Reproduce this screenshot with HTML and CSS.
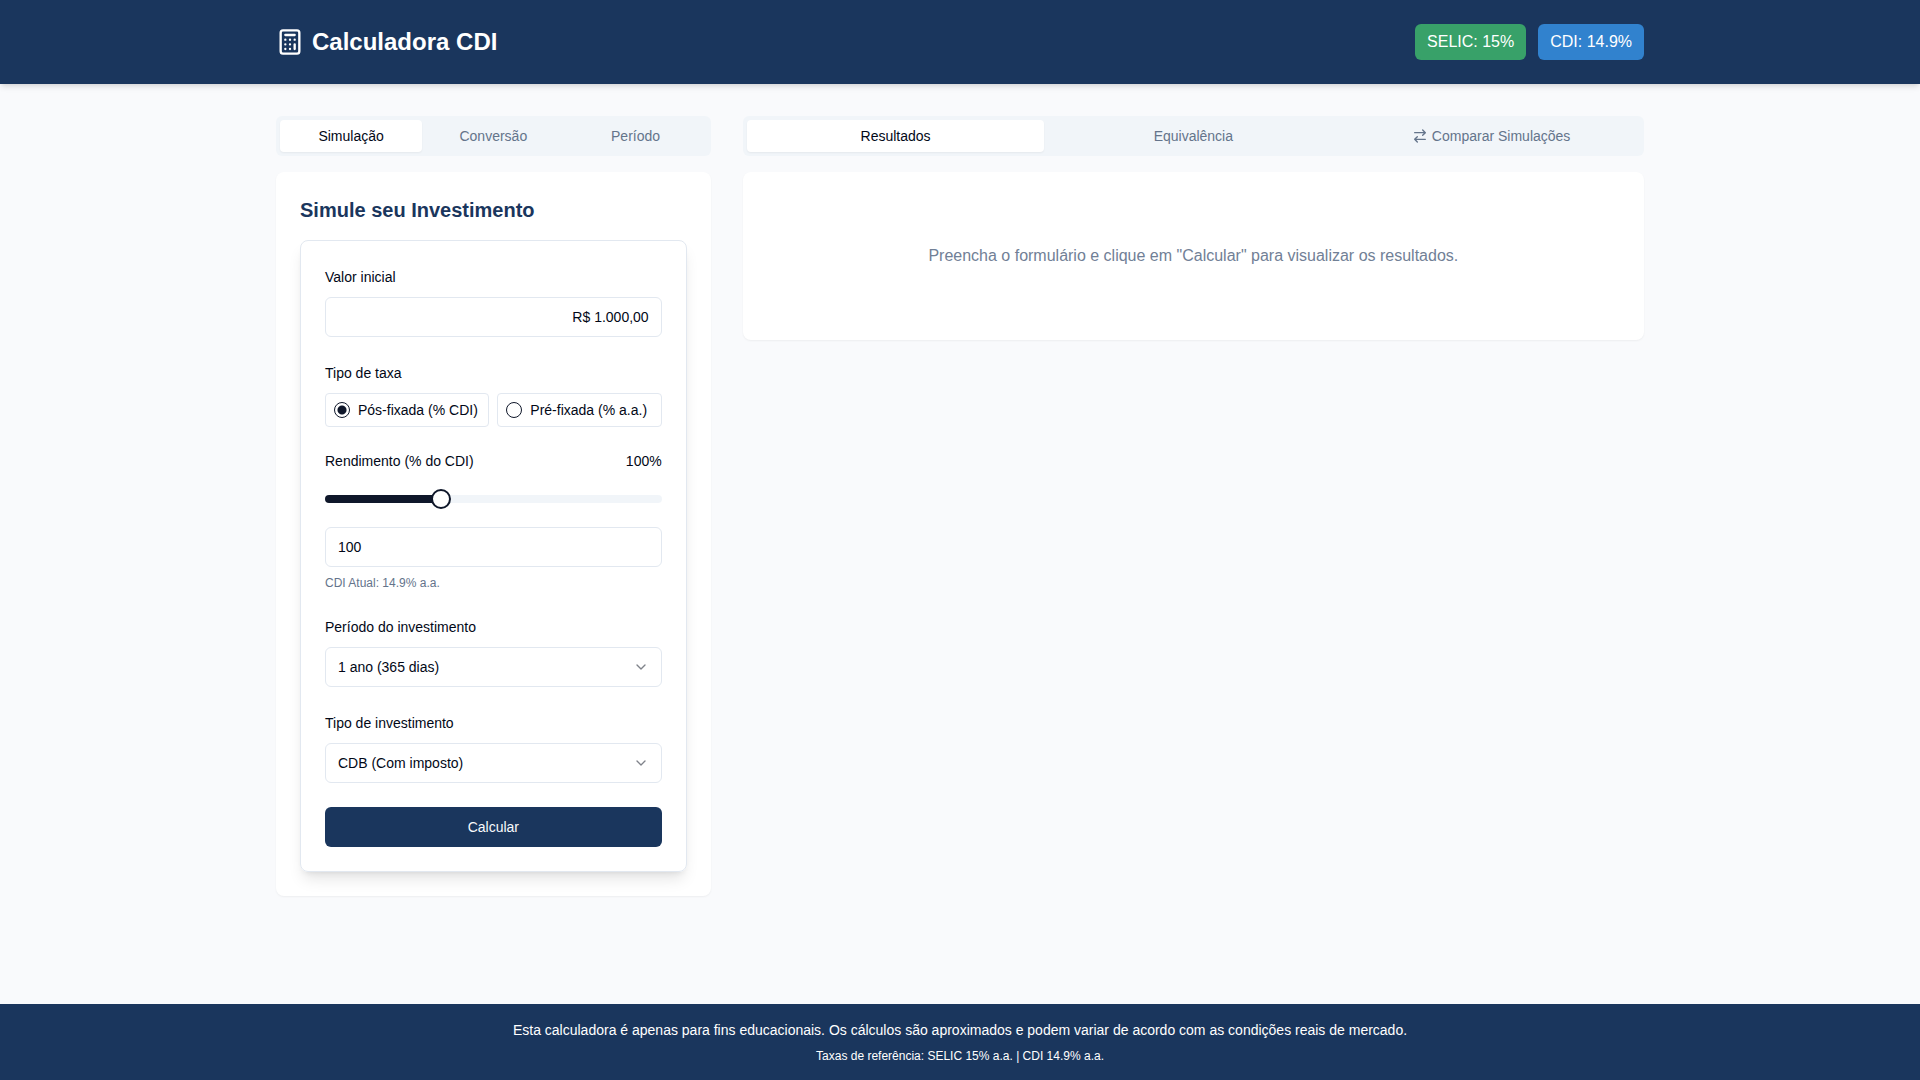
FILE: index.html
```html
<!DOCTYPE html>
<html lang="pt-BR">

<head>
    <meta charset="UTF-8">
    <meta name="viewport" content="width=device-width, initial-scale=1.0">
    <title>Calculadora CDI</title>
    <link rel="stylesheet" href="styles.css">
</head>

<body>
    <header class="header">
        <div class="container header-content">
            <div class="logo">
                <svg width="28" height="28" viewBox="0 0 24 24" fill="none" stroke="currentColor" stroke-width="2" stroke-linecap="round" stroke-linejoin="round">
                    <rect width="16" height="20" x="4" y="2" rx="2"/>
                    <path d="M8 6h8M16 14v4M16 10h.01M12 10h.01M8 10h.01M12 14h.01M8 14h.01M12 18h.01M8 18h.01"/>
                </svg>
                <h1>Calculadora CDI</h1>
            </div>
            <div class="taxas">
                <span class="taxa selic">SELIC: 15%</span>
                <span class="taxa cdi">CDI: 14.9%</span>
            </div>
        </div>
    </header>

    <main class="container main">
        <section>
            <div class="tabs" role="tablist">
                <button type="button" role="tab" aria-selected="true" class="tab active">Simulação</button>
                <button type="button" role="tab" aria-selected="false" class="tab">Conversão</button>
                <button type="button" role="tab" aria-selected="false" class="tab">Período</button>
            </div>
            <div class="panel">
                <h2>Simule seu Investimento</h2>
                <form class="card">
                    <div class="field">
                        <label for="valor">Valor inicial</label>
                        <input type="text" id="valor" class="input valor" value="R$ 1.000,00">
                    </div>

                    <fieldset class="field">
                        <legend>Tipo de taxa</legend>
                        <div class="radios">
                            <label class="radio"><input type="radio" name="taxa" value="pos" checked>Pós-fixada (% CDI)</label>
                            <label class="radio"><input type="radio" name="taxa" value="pre">Pré-fixada (% a.a.)</label>
                        </div>
                    </fieldset>

                    <div class="rendimento">
                        <div class="rendimento-top">
                            <label for="rendimento">Rendimento (% do CDI)</label>
                            <span>100%</span>
                        </div>
                        <input type="range" id="rendimento" class="slider" min="50" max="200" value="100" style="--fill: 33%">
                        <input type="text" class="input" inputmode="numeric" aria-label="Rendimento" value="100">
                        <p class="hint">CDI Atual: 14.9% a.a.</p>
                    </div>

                    <div class="field">
                        <label for="periodo">Período do investimento</label>
                        <div class="select">
                            <select id="periodo" class="input">
                                <option>1 ano (365 dias)</option>
                            </select>
                            <svg width="16" height="16" viewBox="0 0 24 24" fill="none" stroke="currentColor" stroke-width="2" stroke-linecap="round" stroke-linejoin="round"><path d="m6 9 6 6 6-6"/></svg>
                        </div>
                    </div>

                    <div class="field">
                        <label for="tipo">Tipo de investimento</label>
                        <div class="select">
                            <select id="tipo" class="input">
                                <option>CDB (Com imposto)</option>
                            </select>
                            <svg width="16" height="16" viewBox="0 0 24 24" fill="none" stroke="currentColor" stroke-width="2" stroke-linecap="round" stroke-linejoin="round"><path d="m6 9 6 6 6-6"/></svg>
                        </div>
                    </div>

                    <button type="button" class="calcular">Calcular</button>
                </form>
            </div>
        </section>

        <section class="resultados">
            <div class="tabs" role="tablist">
                <button type="button" role="tab" aria-selected="true" class="tab active">Resultados</button>
                <button type="button" role="tab" aria-selected="false" class="tab">Equivalência</button>
                <button type="button" role="tab" aria-selected="false" class="tab">
                    <svg width="16" height="16" viewBox="0 0 24 24" fill="none" stroke="currentColor" stroke-width="2" stroke-linecap="round" stroke-linejoin="round"><path d="m16 3 4 4-4 4M20 7H4M8 21l-4-4 4-4M4 17h16"/></svg>
                    Comparar Simulações
                </button>
            </div>
            <div class="panel">
                <p class="vazio">Preencha o formulário e clique em "Calcular" para visualizar os resultados.</p>
            </div>
        </section>
    </main>

    <footer class="footer">
        <p>Esta calculadora é apenas para fins educacionais. Os cálculos são aproximados e podem variar de acordo com as condições reais de mercado.</p>
        <p class="referencia">Taxas de referência: SELIC 15% a.a. | CDI 14.9% a.a.</p>
    </footer>
</body>

</html>
```
FILE: styles.css
```css
* {
    box-sizing: border-box;
    margin: 0;
    padding: 0;
}

body {
    display: flex;
    flex-direction: column;
    min-height: 100vh;
    background-color: #f9fafc;
    color: #020817;
    font-family: "Liberation Sans", Arial, sans-serif;
    font-size: 16px;
    line-height: 24px;
}

button, input, select {
    font: inherit;
    color: inherit;
}

.container {
    width: 100%;
    max-width: 1400px;
    margin: 0 auto;
    padding: 0 16px;
}

/* header */
.header {
    background-color: #1a365d;
    color: #fff;
    padding: 24px 0;
    box-shadow: 0 4px 6px -1px rgba(0, 0, 0, 0.1), 0 2px 4px -2px rgba(0, 0, 0, 0.1);
}

.header-content, .logo, .taxas {
    display: flex;
    align-items: center;
}

.header-content {
    justify-content: space-between;
}

.logo {
    gap: 8px;
}

h1 {
    font-size: 24px;
    line-height: 32px;
}

.taxas {
    gap: 12px;
}

.taxa {
    padding: 6px 12px;
    border-radius: 6px;
}

.selic {
    background-color: #38a169;
}

.cdi {
    background-color: #3182ce;
}

/* conteudo */
.main {
    flex: 1;
    display: grid;
    grid-template-columns: repeat(3, 1fr);
    align-items: start;
    gap: 32px;
    padding-top: 32px;
    padding-bottom: 32px;
}

.resultados {
    grid-column: span 2;
}

.tabs {
    display: grid;
    grid-template-columns: repeat(3, 1fr);
    padding: 4px;
    margin-bottom: 16px;
    background-color: #f1f5f9;
    border-radius: 6px;
}

.tab {
    display: flex;
    align-items: center;
    justify-content: center;
    gap: 4px;
    padding: 6px 12px;
    border: none;
    border-radius: 4px;
    background: none;
    color: #64748b;
    font-size: 14px;
    line-height: 20px;
    cursor: pointer;
}

.tab.active {
    background-color: #fff;
    color: #020817;
    box-shadow: 0 1px 2px rgba(0, 0, 0, 0.05);
}

.panel {
    background-color: #fff;
    padding: 24px;
    border-radius: 8px;
    box-shadow: 0 1px 2px rgba(0, 0, 0, 0.05);
}

h2 {
    font-size: 20px;
    line-height: 28px;
    color: #1a365d;
    margin-bottom: 16px;
}

.card {
    display: flex;
    flex-direction: column;
    gap: 24px;
    padding: 24px;
    border: 1px solid #e2e8f0;
    border-radius: 8px;
    box-shadow: 0 10px 15px -3px rgba(0, 0, 0, 0.1), 0 4px 6px -4px rgba(0, 0, 0, 0.1);
    font-size: 14px;
}

.field {
    border: none;
    min-width: 0;
}

.field > label, .field > legend {
    display: block;
    margin-bottom: 8px;
}

.input {
    display: block;
    width: 100%;
    height: 40px;
    padding: 8px 12px;
    border: 1px solid #e2e8f0;
    border-radius: 6px;
    background-color: #fff;
    line-height: 20px;
}

.valor {
    text-align: right;
}

.radios {
    display: grid;
    grid-template-columns: 1fr 1fr;
    gap: 8px;
}

.radio {
    display: flex;
    align-items: center;
    gap: 8px;
    padding: 8px;
    border: 1px solid #e2e8f0;
    border-radius: 4px;
    line-height: 16px;
    white-space: nowrap;
}

.radio input {
    appearance: none;
    width: 16px;
    height: 16px;
    border: 1px solid #0f172a;
    border-radius: 50%;
}

.radio input:checked {
    background: radial-gradient(circle, #0f172a 4px, transparent 5px);
}

.rendimento-top {
    display: flex;
    justify-content: space-between;
    line-height: 20px;
}

.slider {
    appearance: none;
    display: block;
    width: 100%;
    height: 20px;
    margin: 18px 0;
    background: none;
}

.slider::-webkit-slider-runnable-track {
    height: 8px;
    border-radius: 4px;
    background: linear-gradient(to right, #0f172a var(--fill), #f1f5f9 var(--fill));
}

.slider::-webkit-slider-thumb {
    appearance: none;
    width: 20px;
    height: 20px;
    margin-top: -6px;
    border: 2px solid #0f172a;
    border-radius: 50%;
    background-color: #fff;
}

.hint {
    margin-top: 8px;
    font-size: 12px;
    line-height: 16px;
    color: #64748b;
}

.select {
    position: relative;
}

.select select {
    appearance: none;
}

/* seta por cima do select */
.select svg {
    position: absolute;
    top: 12px;
    right: 13px;
    opacity: 0.5;
    pointer-events: none;
}

.calcular {
    height: 40px;
    border: none;
    border-radius: 6px;
    background-color: #1a365d;
    color: #f8fafc;
    cursor: pointer;
}

.vazio {
    padding: 48px 0;
    text-align: center;
    color: #718096;
}

/* footer */
.footer {
    background-color: #1a365d;
    color: #fff;
    padding: 16px;
    text-align: center;
    font-size: 14px;
    line-height: 20px;
}

.referencia {
    margin-top: 8px;
    font-size: 12px;
    line-height: 16px;
}
```
